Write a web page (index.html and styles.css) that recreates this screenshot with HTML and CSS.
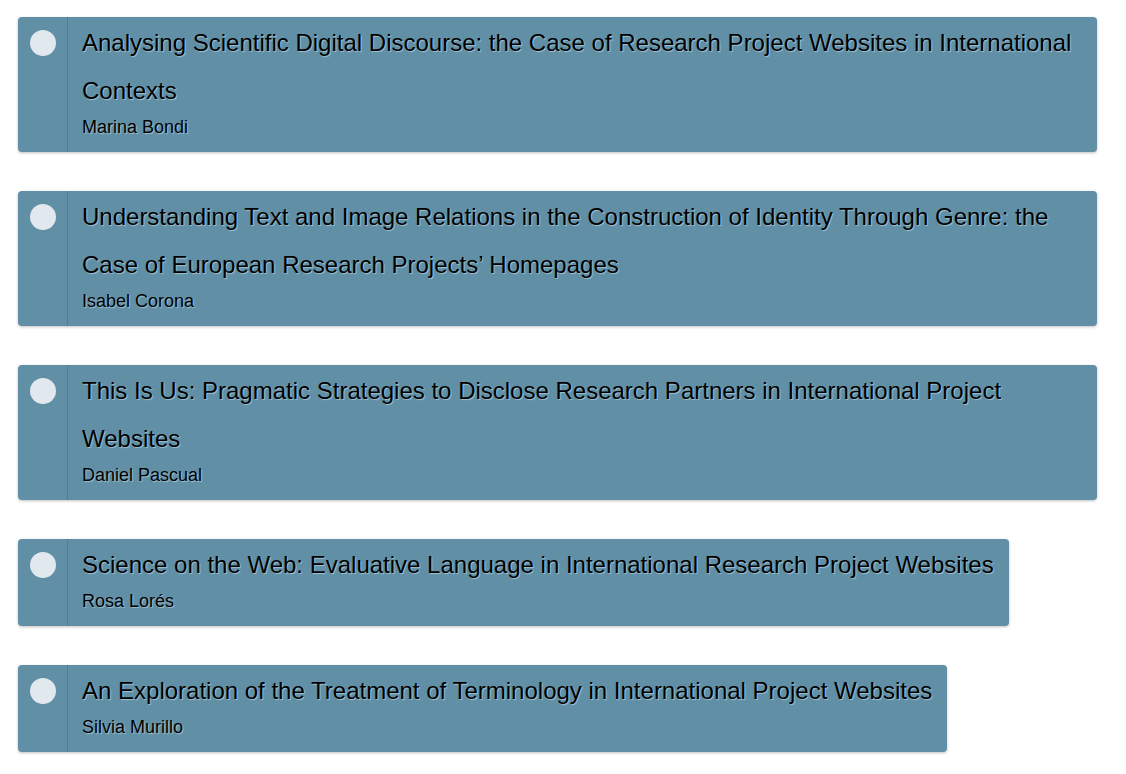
FILE: index.html
```html
<!DOCTYPE html>
<html lang="en">
<head>
    <meta charset="UTF-8">
    <meta name="viewport" content="width=device-width, initial-scale=1.0">
    <title>Chapters</title>
    <link rel="stylesheet" href="styles.css">
</head>
<body>

<div class="chapters">
    <div class="chapter">
        <div class="check"><span class="dot"></span></div>
        <div class="info">
            <div class="title">Analysing Scientific Digital Discourse: the Case of Research Project Websites in International Contexts</div>
            <div class="author">Marina Bondi</div>
        </div>
    </div>

    <div class="chapter">
        <div class="check"><span class="dot"></span></div>
        <div class="info">
            <div class="title">Understanding Text and Image Relations in the Construction of Identity Through Genre: the Case of European Research Projects’ Homepages</div>
            <div class="author">Isabel Corona</div>
        </div>
    </div>

    <div class="chapter">
        <div class="check"><span class="dot"></span></div>
        <div class="info">
            <div class="title">This Is Us: Pragmatic Strategies to Disclose Research Partners in International Project Websites</div>
            <div class="author">Daniel Pascual</div>
        </div>
    </div>

    <div class="chapter">
        <div class="check"><span class="dot"></span></div>
        <div class="info">
            <div class="title">Science on the Web: Evaluative Language in International Research Project Websites</div>
            <div class="author">Rosa Lorés</div>
        </div>
    </div>

    <div class="chapter">
        <div class="check"><span class="dot"></span></div>
        <div class="info">
            <div class="title">An Exploration of the Treatment of Terminology in International Project Websites</div>
            <div class="author">Silvia Murillo</div>
        </div>
    </div>
</div>

</body>
</html>
```

FILE: styles.css
```css
body {
    font-family: Arial, "Liberation Sans", sans-serif;
    margin: 0;
    background: #fff;
}
.chapters {
    display: flex;
    flex-direction: column;
    align-items: flex-start;
    gap: 39px;
    padding: 17px 29px 20px 18px;
}
.chapter {
    display: flex;
    max-width: 1079px;
    background-color: #608fa6;
    border-radius: 4px;
    box-shadow: 0 1px 3px rgba(0, 0, 0, 0.25);
}
.check {
    flex: 0 0 50px;
    border-right: 1px solid #4f7d93; /* divider next to the circle */
    padding: 13px 0 0 1px;
    box-sizing: border-box;
    display: flex;
    justify-content: center;
    align-items: flex-start;
}
.dot {
    width: 26px;
    height: 26px;
    border-radius: 50%;
    background-color: #e1e8ee;
}
.info {
    padding: 2px 15px 14px 14px;
    color: #000;
    text-shadow: 1px 1px 1px #9fc2d4;
}
.title {
    font-size: 24px;
    line-height: 48px;
}
.author {
    font-size: 18px;
    line-height: 22px;
    padding-top: 1px;
}
```
